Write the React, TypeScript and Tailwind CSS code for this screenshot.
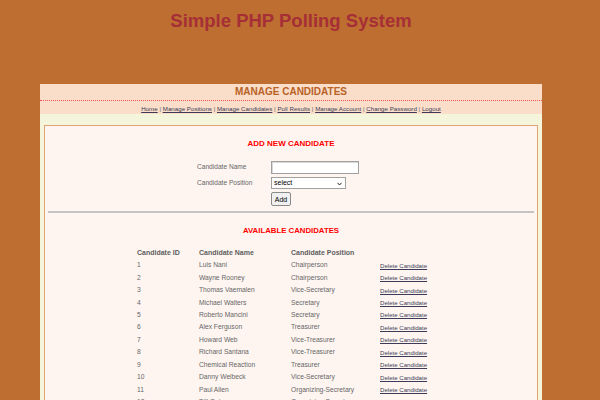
import type { FC } from 'react';

type Candidate = {
  id: number;
  name: string;
  position: string;
};

const candidates: Candidate[] = [
  { id: 1, name: 'Luis Nani', position: 'Chairperson' },
  { id: 2, name: 'Wayne Rooney', position: 'Chairperson' },
  { id: 3, name: 'Thomas Vaemalen', position: 'Vice-Secretary' },
  { id: 4, name: 'Michael Walters', position: 'Secretary' },
  { id: 5, name: 'Roberto Mancini', position: 'Secretary' },
  { id: 6, name: 'Alex Ferguson', position: 'Treasurer' },
  { id: 7, name: 'Howard Web', position: 'Vice-Treasurer' },
  { id: 8, name: 'Richard Santana', position: 'Vice-Treasurer' },
  { id: 9, name: 'Chemical Reaction', position: 'Treasurer' },
  { id: 10, name: 'Danny Welbeck', position: 'Vice-Secretary' },
  { id: 11, name: 'Paul Allen', position: 'Organizing-Secretary' },
  { id: 12, name: 'Bill Gates', position: 'Organizing-Secretary' },
  { id: 13, name: 'Steve Jobs', position: 'Treasurer' },
];

const navLinks = [
  'Home',
  'Manage Positions',
  'Manage Candidates',
  'Poll Results',
  'Manage Account',
  'Change Password',
  'Logout',
];

const Nav: FC = () => (
  <div className="h-[13px] pt-[2px] bg-[#fadec9] text-center text-[6.2px] leading-[11px] text-[#555]">
    {navLinks.map((link, idx) => (
      <span key={link}>
        {idx > 0 && <span className="text-[#666]"> | </span>}
        <a href="#" className="underline text-[#3b3b57]">
          {link}
        </a>
      </span>
    ))}
  </div>
);

const AddForm: FC = () => (
  <div className="mt-[12px] ml-[152px] grid grid-cols-[74px_auto] gap-y-[3px] items-center text-[6.6px] text-[#666]">
    <span>Candidate Name</span>
    <input
      type="text"
      className="w-[88px] h-[12.5px] bg-white border border-[#a0a0a0] shadow-[inset_1px_1px_0_#d8d8d8] outline-none"
    />
    <span>Candidate Position</span>
    <div className="relative w-[75px] h-[12.5px] bg-white border border-[#a0a0a0] flex items-center pl-[2px] text-[7px] text-black">
      select
      <svg
        className="absolute right-[3px] top-[4px]"
        width="5"
        height="4"
        viewBox="0 0 5 4"
      >
        <path d="M0.5 0.8 L2.5 3 L4.5 0.8" stroke="#222" strokeWidth="1" fill="none" />
      </svg>
    </div>
    <span />
    <button className="w-[20px] h-[14px] bg-[#f0f0f0] border border-[#8a8a8a] rounded-[2px] text-[7px] text-black leading-none">
      Add
    </button>
  </div>
);

const CandidateTable: FC<{ rows: Candidate[] }> = ({ rows }) => (
  <div className="mt-[11px] ml-[92px] text-[6.7px] text-[#666]">
    <div className="h-[12px] flex items-center font-bold text-[7px] text-[#5e5e5e]">
      <span className="w-[62px]">Candidate ID</span>
      <span className="w-[92px]">Candidate Name</span>
      <span className="w-[89px]">Candidate Position</span>
    </div>
    {rows.map((row) => (
      <div key={row.id} className="h-[12.45px] flex items-center">
        <span className="w-[62px]">{row.id}</span>
        <span className="w-[92px]">{row.name}</span>
        <span className="w-[89px]">{row.position}</span>
        <a href="#" className="underline text-[#3b3b57] text-[6.1px]">
          Delete Candidate
        </a>
      </div>
    ))}
  </div>
);

export default function App() {
  return (
    <div className="min-h-screen h-[400px] overflow-hidden bg-[#bd6e30] font-['Liberation_Sans',Arial,sans-serif]">
      <div className="ml-[40px] w-[502px]">
        <h1 className="pt-[9px] text-center text-[18.5px] leading-[24px] font-bold text-[#a62f37]">
          Simple PHP Polling System
        </h1>
        <div className="mt-[51px]">
          <div className="h-[17px] bg-[#fadec9] border-b border-dotted border-[#f05050] text-center text-[10px] leading-[16px] font-bold text-[#b86226]">
            MANAGE CANDIDATES
          </div>
          <Nav />
          <div className="bg-[#f5f5dc] pt-[11px] px-[4px]">
            <div className="border border-[#e2a472] bg-[#fef5f1] h-[400px]">
              <h2 className="pt-[13px] text-center text-[8px] leading-[10px] font-bold text-[#ff0000]">
                ADD NEW CANDIDATE
              </h2>
              <AddForm />
              <div className="mt-[5px] mx-[3px] h-[2px] bg-[#c4c4c4]" />
              <h2 className="mt-[13px] text-center text-[7.8px] leading-[10px] font-bold text-[#ff0000]">
                AVAILABLE CANDIDATES
              </h2>
              <CandidateTable rows={candidates} />
            </div>
          </div>
        </div>
      </div>
    </div>
  );
}
